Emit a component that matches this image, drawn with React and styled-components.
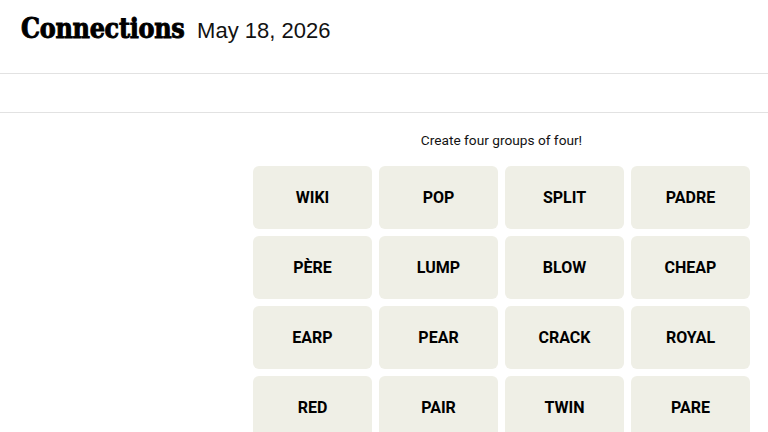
import React from 'react';
import styled, { createGlobalStyle } from 'styled-components';

const words = [
    'WIKI', 'POP', 'SPLIT', 'PADRE',
    'PÈRE', 'LUMP', 'BLOW', 'CHEAP',
    'EARP', 'PEAR', 'CRACK', 'ROYAL',
    'RED', 'PAIR', 'TWIN', 'PARE',
];

const Global = createGlobalStyle`
  body {
    margin: 0;
    background: #fff;
    font-family: "Liberation Sans", Arial, sans-serif;
    color: #000;
  }
`;

const Header = styled.header`
  height: 58px;
  padding: 15px 21px 0;
  border-bottom: 1px solid #e2e2e2;
  display: flex;
  align-items: baseline;
  gap: 13px;
`;

const Title = styled.h1`
  margin: 0 -9px 0 0;
  font-family: "DejaVu Serif Condensed", "DejaVu Serif", serif;
  font-weight: 700;
  font-size: 28px;
  line-height: 1;
  letter-spacing: -0.3px;
  -webkit-text-stroke: 0.9px #000;
  transform: scaleX(0.95);
  transform-origin: left center;
`;

const DateText = styled.span`
  font-family: "Liberation Sans", Arial, sans-serif;
  font-size: 22px;
  line-height: 1;
  color: #121212;
`;

const SubBar = styled.div`
  height: 38px;
  border-bottom: 1px solid #e2e2e2;
`;

const Layout = styled.div`
  display: grid;
  grid-template-columns: 235px 1fr;
`;

const Main = styled.main`
  display: flex;
  flex-direction: column;
  align-items: center;
  padding-top: 17px;
`;

const Prompt = styled.p`
  margin: 0 0 16px;
  font-family: Roboto, "Liberation Sans", sans-serif;
  font-size: 13.7px;
  color: #121212;
  line-height: 20px;
`;

const Board = styled.div`
  display: grid;
  grid-template-columns: repeat(4, 119px);
  grid-auto-rows: 63px;
  gap: 7px;
`;

const Tile = styled.button`
  border: none;
  border-radius: 6px;
  background: #efefe6;
  font-family: Roboto, "Liberation Sans", sans-serif;
  font-weight: 700;
  font-size: 16px;
  color: #000;
  text-transform: uppercase;
  cursor: pointer;
  padding: 0;
`;

const App = () => {
    return (
        <>
            <Global />
            <Header>
                <Title>Connections</Title>
                <DateText>May 18, 2026</DateText>
            </Header>
            <SubBar />
            <Layout>
                <div />
                <Main>
                    <Prompt>Create four groups of four!</Prompt>
                    <Board>
                        {words.map((w) => (
                            <Tile key={w}>{w}</Tile>
                        ))}
                    </Board>
                </Main>
            </Layout>
        </>
    );
};

export default App;
